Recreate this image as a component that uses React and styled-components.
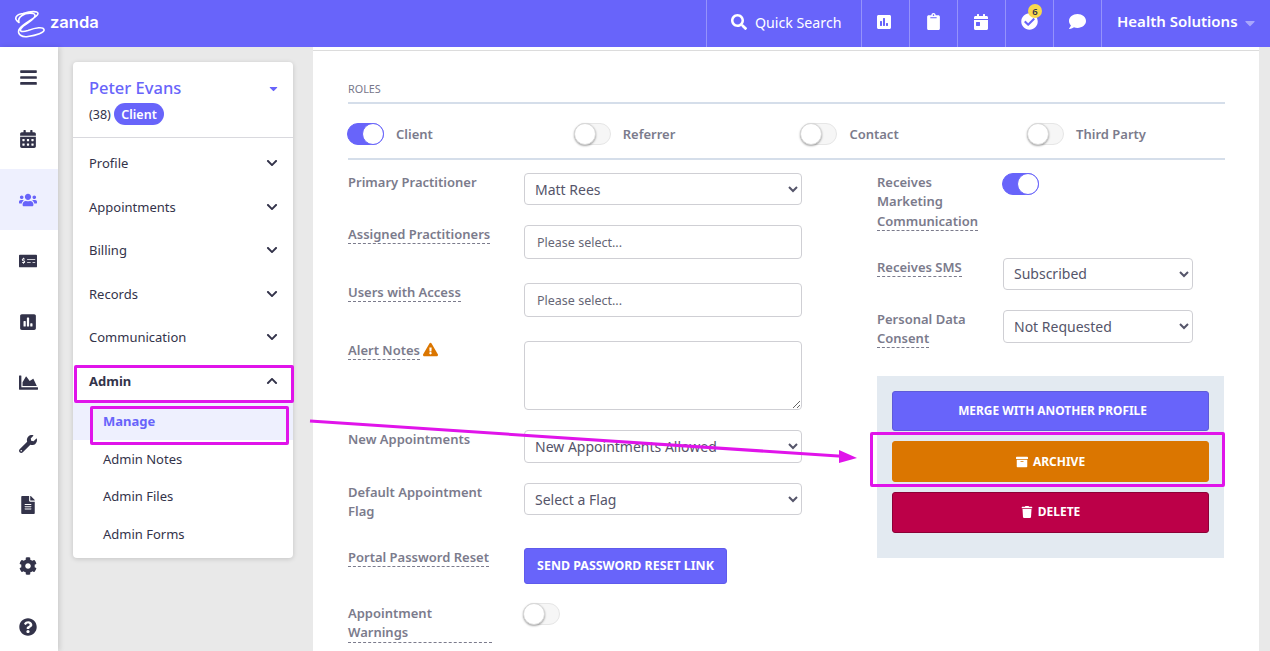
import React from 'react';
import styled, { createGlobalStyle } from 'styled-components';
import { FaBars, FaCalendarAlt, FaUsers, FaMoneyCheckAlt, FaPoll, FaChartArea, FaWrench, FaFileAlt, FaCog, FaQuestionCircle, FaSearch, FaClipboard, FaCalendarDay, FaCheckCircle, FaComment, FaExclamationTriangle, FaArchive, FaTrash, FaChevronDown, FaChevronUp, FaCaretDown } from 'react-icons/fa';

const Global = createGlobalStyle`
  html, body { margin: 0; padding: 0; height: 651px; overflow: hidden; }
  body { font-family: "Noto Sans", "Open Sans", "Liberation Sans", sans-serif; color: #33334a; }
  * { box-sizing: border-box; }
`;
const Page = styled.div`position: relative; width: 1270px; height: 651px; overflow: hidden; display: flex; flex-direction: column; background: #e9e9e9;`;
const TopBar = styled.header`height: 47px; flex: none; display: flex; align-items: stretch; background: #6864fa; color: #fff;`;
const Brand = styled.div`display: flex; align-items: center; padding-left: 13px; gap: 4px; flex: 1;`;
const BrandName = styled.span`font-family: Inter, sans-serif; font-size: 16.5px; font-weight: 600; line-height: 1; margin-top: -3px;`;
const TopItem = styled.div`width: ${p => p.$w || 48}px; display: flex; align-items: center; justify-content: ${p => p.$start ? 'flex-start' : 'center'}; position: relative; border-left: 1.5px solid rgba(255,255,255,.3); font-size: 19px; padding-bottom: 4px; padding-left: ${p => p.$pl || 0}px; padding-right: ${p => p.$pr || 0}px;`;
const SearchText = styled.span`font-size: 14.2px; margin-left: 8px; line-height: 1; margin-top: 4px;`;
const OrgName = styled.span`font-size: 15px; font-weight: 600; line-height: 1;`;
const OrgCaret = styled.span`position: absolute; right: 12px; top: 15px; color: #a9a7fc; font-size: 16px; display: flex;`;
const Badge = styled.span`position: absolute; top: 4px; left: 22px; width: 14px; height: 14px; border-radius: 50%; background: #f8d94c; color: #33334a; font-size: 9.5px; font-weight: 600; display: flex; align-items: center; justify-content: center;`;
const Body = styled.div`flex: 1; display: flex; min-height: 0;`;
const Rail = styled.nav`width: 58px; flex: none; background: #fff; box-shadow: 2px 0 5px rgba(0,0,0,.12); display: flex; flex-direction: column; z-index: 1;`;
const RailItem = styled.div`height: 61px; flex: none; display: flex; align-items: center; justify-content: center; padding-right: 2px; font-size: ${p => p.$size || 18}px; color: ${p => p.$active ? '#6864fa' : '#33334a'}; background: ${p => p.$active ? '#eef0fe' : 'transparent'};`;
const SideArea = styled.aside`width: 255px; flex: none; padding: 15px 20px 0 15px;`;
const Card = styled.div`width: 220px; height: 496px; background: #fff; border-radius: 4px; box-shadow: 0 1px 5px rgba(0,0,0,.16); padding-bottom: 5px;`;
const CardHead = styled.div`height: 76px; padding: 14px 16px 0; border-bottom: 1px solid #d9d9de; position: relative;`;
const Name = styled.div`font-size: 16.5px; font-weight: 500; color: #6864fa; line-height: 24px;`;
const HeadCaret = styled.span`position: absolute; right: 13px; top: 20px; color: #6864fa; font-size: 13px; display: flex;`;
const CountRow = styled.div`display: flex; align-items: center; gap: 3px; font-size: 12.5px; margin-top: 3px;`;
const Pill = styled.span`height: 22px; padding: 0 7.5px; border-radius: 11px; background: #6864fa; color: #fff; font-size: 12.5px; font-weight: 600; display: flex; align-items: center;`;
const MenuList = styled.div`padding-top: 3.3px;`;
const MenuItem = styled.div`height: ${p => p.$open ? 43 : 43.6}px; padding: 0 15px 0 16px; display: flex; align-items: center; justify-content: space-between; font-size: 13px; font-weight: ${p => p.$open ? 700 : 400}; svg { font-size: 12px; color: #33334a; }`;
const SubItem = styled.div`height: 37.5px; padding: 0 30px; display: flex; align-items: center; font-size: 13px; ${p => p.$active ? 'background:#eef0fe;color:#6864fa;font-weight:700;' : ''}`;
const Main = styled.main`width: 946px; flex: none; background: #fff; overflow: hidden; position: relative; padding: 3px 0 0;`;
const TopRule = styled.div`height: 1px; background: #dcdcdc;`;
const Content = styled.div`padding: 31px 34px 0 35px;`;
const SectionTitle = styled.div`font-size: 10.8px; color: #77778a; line-height: 14px; font-weight: 400;`;
const Rule = styled.div`height: 2px; background: #d5deea; margin-top: ${p => p.$mt || 0}px;`;
const RolesRow = styled.div`display: grid; grid-template-columns: repeat(4, 226.7px); height: 54px; padding-top: 6px; align-items: center;`;
const Role = styled.label`display: flex; align-items: center; gap: 12px; font-size: 13px; font-weight: 600; color: #7b7b8c;`;
const Track = styled.span`display: block; position: relative; width: 37px; height: 22px; border-radius: 11px; margin-left: -1px; background: ${p => p.$on ? '#6864fa' : '#f6f6f6'}; border: 1px solid ${p => p.$on ? '#6864fa' : '#e6e6e6'}; flex: none;`;
const Knob = styled.span`position: absolute; top: -1px; ${p => p.$on ? 'right:-1px;' : 'left:-1px;'} width: 22px; height: 22px; border-radius: 50%; background: #fff; border: 1px solid ${p => p.$on ? '#6864fa' : '#d8d8d8'}; box-shadow: ${p => p.$on ? 'none' : '0 1px 2px rgba(0,0,0,.35)'};`;
const Columns = styled.div`display: flex; margin-top: 13px;`;
const LeftCol = styled.div`width: 529px; flex: none; display: flex; flex-direction: column;`;
const RightCol = styled.div`width: 348px; flex: none; display: flex; flex-direction: column;`;
const Row = styled.div`display: grid; grid-template-columns: ${p => p.$label || 176}px ${p => p.$ctl || 278}px; margin-bottom: ${p => p.$mb || 0}px; align-items: start;`;
const Label = styled.div`font-size: 13px; font-weight: 600; line-height: 19.3px; color: #7b7b8c; padding-top: ${p => p.$pt ?? 0}px;`;
const Dashed = styled.span`border-bottom: 1px dashed #7b7b8c; ${p => p.$block ? `display:block;width:${p.$block}px;` : 'display:inline-block;line-height:18px;'}`;
const Warn = styled.span`color: #db7600; font-size: 15px; margin-left: 3px; vertical-align: -2px; display: inline-flex;`;
const Select = styled.select`width: 100%; height: ${p => p.$h || 32}px; border: 1px solid #cfcfd4; border-radius: 4px; background: #fff; font-family: inherit; font-size: 14px; color: #55556a; padding: 0 6px; display: block;`;
const Input = styled.input`width: 100%; height: 34px; border: 1px solid #cfcfd4; border-radius: 4px; padding: 0 12px; font-family: inherit; font-size: 12.5px; display: block; &::placeholder { color: #666675; opacity: 1; }`;
const Textarea = styled.textarea`width: 100%; height: 69px; border: 1px solid #cfcfd4; border-radius: 4px; display: block; font-family: inherit;`;
const Button = styled.button`height: ${p => p.$h}px; width: ${p => p.$w ? p.$w + 'px' : '100%'}; background: ${p => p.$bg}; border: 1px solid ${p => p.$border}; border-radius: 3px; color: #fff; font-family: inherit; font-size: ${p => p.$fs || 12}px; font-weight: 700; display: flex; align-items: center; justify-content: center; gap: 5px; padding: 0 0 ${p => p.$pb || 0}px ${p => p.$pl || 0}px; svg { font-size: 12px; }`;
const ActionPanel = styled.section`width: 347px; height: 182px; background: #e3eaf1; margin-top: 28px; padding: 15px; display: flex; flex-direction: column; gap: 10px;`;
const BarEnd = styled.div`flex: 1; background: #e9e9e9;`;
const Overlay = styled.div`position: absolute; left: ${p => p.$x}px; top: ${p => p.$y}px; width: ${p => p.$w}px; height: ${p => p.$h}px; border: 3px solid #e014ea; border-radius: 2px; z-index: 5;`;
const ArrowSvg = styled.svg`position: absolute; left: 0; top: 0; z-index: 5; pointer-events: none;`;

const Toggle = ({ on }) => <Track $on={on}><Knob $on={on} /></Track>;
const Logo = () => (
  <svg width="33" height="32" viewBox="5 3.5 33 32" fill="none" stroke="#fff" strokeWidth="1.6" strokeLinecap="round" strokeLinejoin="round">
    <path d="M11 18 C5 14 8 10 15 9 C22 7 30 6 30 9 C30 13 14 19 11 25 C9 30 14 33 20 32 C28 31 37 28 36 25 C35 22 28 23 20 26 C14 28 11 27 13 24 C16 19 27 16 27 11 C27 8 18 8 14 11 C11 13 10 15 11 18" />
  </svg>
);

export default function App() {
  return (
    <Page>
      <Global />
      <TopBar>
        <Brand><Logo /><BrandName>zanda</BrandName></Brand>
        <TopItem $w={155} $start $pl={24}><FaSearch size={16} /><SearchText>Quick Search</SearchText></TopItem>
        <TopItem $pr={3}><FaPoll size={16} /></TopItem>
        <TopItem $pr={1}><FaClipboard size={17} /></TopItem>
        <TopItem $pr={1}><FaCalendarDay size={16} /></TopItem>
        <TopItem><FaCheckCircle size={17} /><Badge>6</Badge></TopItem>
        <TopItem><FaComment size={17} /></TopItem>
        <TopItem $w={169} $start $pl={15}><OrgName>Health Solutions</OrgName><OrgCaret><FaCaretDown /></OrgCaret></TopItem>
      </TopBar>
      <Body>
        <Rail>
          <RailItem $size={19}><FaBars /></RailItem>
          <RailItem><FaCalendarAlt /></RailItem>
          <RailItem $active><FaUsers /></RailItem>
          <RailItem><FaMoneyCheckAlt /></RailItem>
          <RailItem><FaPoll /></RailItem>
          <RailItem $size={19}><FaChartArea /></RailItem>
          <RailItem><FaWrench /></RailItem>
          <RailItem><FaFileAlt /></RailItem>
          <RailItem><FaCog /></RailItem>
          <RailItem><FaQuestionCircle /></RailItem>
        </Rail>
        <SideArea>
          <Card>
            <CardHead>
              <Name>Peter Evans</Name>
              <HeadCaret><FaCaretDown /></HeadCaret>
              <CountRow>(38)<Pill>Client</Pill></CountRow>
            </CardHead>
            <MenuList>
              {['Profile', 'Appointments', 'Billing', 'Records', 'Communication'].map(t => (
                <MenuItem key={t}>{t}<FaChevronDown /></MenuItem>
              ))}
              <MenuItem $open>Admin<FaChevronUp /></MenuItem>
              <SubItem $active>Manage</SubItem>
              <SubItem>Admin Notes</SubItem>
              <SubItem>Admin Files</SubItem>
              <SubItem>Admin Forms</SubItem>
            </MenuList>
          </Card>
        </SideArea>
        <Main>
          <TopRule />
          <Content>
            <SectionTitle>ROLES</SectionTitle>
            <Rule $mt={6} />
            <RolesRow>
              <Role><Toggle on />Client</Role>
              <Role><Toggle />Referrer</Role>
              <Role><Toggle />Contact</Role>
              <Role><Toggle />Third Party</Role>
            </RolesRow>
            <Rule />
            <Columns>
              <LeftCol>
                <Row $mb={20}>
                  <Label>Primary Practitioner</Label>
                  <Select defaultValue="a"><option value="a">Matt Rees</option></Select>
                </Row>
                <Row $mb={24}>
                  <Label><Dashed>Assigned Practitioners</Dashed></Label>
                  <Input placeholder="Please select..." />
                </Row>
                <Row $mb={24}>
                  <Label><Dashed>Users with Access</Dashed></Label>
                  <Input placeholder="Please select..." />
                </Row>
                <Row $mb={20}>
                  <Label><Dashed>Alert Notes</Dashed><Warn><FaExclamationTriangle /></Warn></Label>
                  <Textarea />
                </Row>
                <Row $mb={20}>
                  <Label>New Appointments</Label>
                  <Select $h={33} defaultValue="a"><option value="a">New Appointments Allowed</option></Select>
                </Row>
                <Row $mb={26}>
                  <Label>Default Appointment<br />Flag</Label>
                  <Select defaultValue="a"><option value="a">Select a Flag</option></Select>
                </Row>
                <Row $mb={19}>
                  <Label><Dashed>Portal Password Reset</Dashed></Label>
                  <Button type="button" $h={36} $w={203} $fs={12.4} $bg="#6864fa" $border="#5f5bec">SEND PASSWORD RESET LINK</Button>
                </Row>
                <Row>
                  <Label $pt={1}><Dashed $block={144}>Appointment<br />Warnings</Dashed></Label>
                  <Toggle />
                </Row>
              </LeftCol>
              <RightCol>
                <Row $label={126} $ctl={190} $mb={27}>
                  <Label>Receives<br />Marketing<br /><Dashed>Communication</Dashed></Label>
                  <Toggle on />
                </Row>
                <Row $label={126} $ctl={190} $mb={20}>
                  <Label><Dashed>Receives SMS</Dashed></Label>
                  <Select defaultValue="a"><option value="a">Subscribed</option></Select>
                </Row>
                <Row $label={126} $ctl={190}>
                  <Label>Personal Data<br /><Dashed>Consent</Dashed></Label>
                  <Select $h={33} defaultValue="a"><option value="a">Not Requested</option></Select>
                </Row>
                <ActionPanel>
                  <Button type="button" $h={40} $pb={2} $pl={4} $fs={11.9} $bg="#6864fa" $border="#5f5bd8">MERGE WITH ANOTHER PROFILE</Button>
                  <Button type="button" $h={41} $bg="#db7600" $border="#db7600"><FaArchive />ARCHIVE</Button>
                  <Button type="button" $h={41} $pb={2} $bg="#bc0048" $border="#8c0036"><FaTrash />DELETE</Button>
                </ActionPanel>
              </RightCol>
            </Columns>
          </Content>
        </Main>
        <BarEnd />
      </Body>
      <Overlay $x={74} $y={365} $w={220} $h={38} />
      <Overlay $x={90} $y={406} $w={199} $h={39} />
      <Overlay $x={870} $y={432} $w={355} $h={55} />
      <ArrowSvg width="1270" height="651" viewBox="0 0 1270 651">
        <line x1="310" y1="421" x2="842" y2="456.3" stroke="#e014ea" strokeWidth="3" />
        <polygon points="857,458 839,450 839,463" fill="#e014ea" />
      </ArrowSvg>
    </Page>
  );
}
